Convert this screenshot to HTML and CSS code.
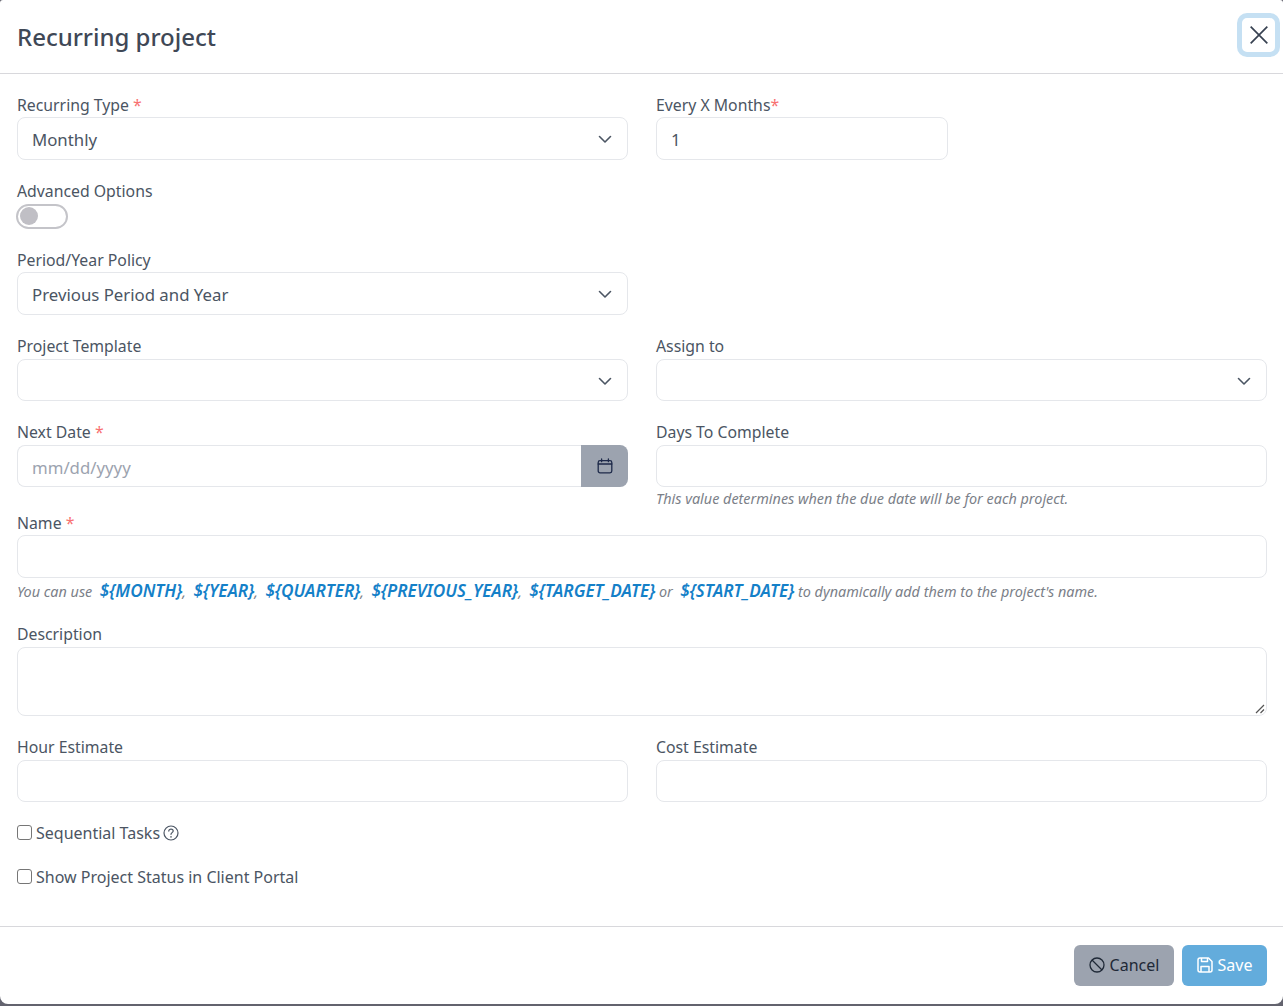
FILE: index.html
```html
<!DOCTYPE html>
<html lang="en">
<head>
<meta charset="utf-8">
<title>Recurring project</title>
<link rel="stylesheet" href="styles.css">
</head>
<body>
<div class="modal">
  <header class="modal-header">
    <h1 class="modal-title">Recurring project</h1>
    <button class="close" type="button" aria-label="Close">
      <svg viewBox="0 0 16 16" width="18" height="18" fill="none" stroke="currentColor" stroke-width="1.5"><path d="M.6.6 15.4 15.4M15.4.6.6 15.4"/></svg>
    </button>
  </header>
  <form class="modal-body">
    <div class="field span-2">
      <label class="label">Recurring Type <span class="req">*</span></label>
      <div class="control select">Monthly<svg class="chev" viewBox="0 0 16 16" width="16" height="16" fill="none" stroke="currentColor" stroke-width="1.6" stroke-linecap="round" stroke-linejoin="round"><path d="m2.5 5.5 5.5 5.5 5.5-5.5"/></svg></div>
    </div>
    <div class="field">
      <label class="label">Every X Months<span class="req">*</span></label>
      <div class="control">1</div>
    </div>
    <div class="field span-4">
      <label class="label">Advanced Options</label>
      <div class="toggle"><span class="knob"></span></div>
    </div>
    <div class="field span-2">
      <label class="label">Period/Year Policy</label>
      <div class="control select">Previous Period and Year<svg class="chev" viewBox="0 0 16 16" width="16" height="16" fill="none" stroke="currentColor" stroke-width="1.6" stroke-linecap="round" stroke-linejoin="round"><path d="m2.5 5.5 5.5 5.5 5.5-5.5"/></svg></div>
    </div>
    <div class="spacer span-2"></div>
    <div class="field span-2">
      <label class="label">Project Template</label>
      <div class="control select"><svg class="chev" viewBox="0 0 16 16" width="16" height="16" fill="none" stroke="currentColor" stroke-width="1.6" stroke-linecap="round" stroke-linejoin="round"><path d="m2.5 5.5 5.5 5.5 5.5-5.5"/></svg></div>
    </div>
    <div class="field span-2">
      <label class="label">Assign to</label>
      <div class="control select"><svg class="chev" viewBox="0 0 16 16" width="16" height="16" fill="none" stroke="currentColor" stroke-width="1.6" stroke-linecap="round" stroke-linejoin="round"><path d="m2.5 5.5 5.5 5.5 5.5-5.5"/></svg></div>
    </div>
    <div class="field span-2">
      <label class="label">Next Date <span class="req">*</span></label>
      <div class="date">
        <div class="control date-input placeholder">mm/dd/yyyy</div>
        <div class="date-btn">
          <svg viewBox="0 0 16 16" width="16" height="16" fill="none" stroke="#1e2a4a" stroke-width="1.3" stroke-linecap="round"><rect x="1.2" y="2.6" width="13.6" height="12.2" rx="1.8"/><path d="M1.2 6h13.6M4.6.9v2.8M11.4.9v2.8"/></svg>
        </div>
      </div>
    </div>
    <div class="field span-2">
      <label class="label">Days To Complete</label>
      <div class="control"></div>
      <p class="help">This value determines when the due date will be for each project.</p>
    </div>
    <div class="field span-4 name-field">
      <label class="label">Name <span class="req">*</span></label>
      <div class="control"></div>
      <p class="help name-help">You can use &nbsp;<b>${MONTH}</b>, &nbsp;<b>${YEAR}</b>, &nbsp;<b>${QUARTER}</b>, &nbsp;<b>${PREVIOUS_YEAR}</b>, &nbsp;<b>${TARGET_DATE}</b> or &nbsp;<b>${START_DATE}</b> to dynamically add them to the project's name.</p>
    </div>
    <div class="field span-4">
      <label class="label">Description</label>
      <div class="control textarea">
        <svg class="grip" viewBox="0 0 10 10" width="10" height="10" stroke="#555" stroke-width="1.2"><path d="M1 9 9 1M5.5 9 9 5.5"/></svg>
      </div>
    </div>
    <div class="field span-2">
      <label class="label">Hour Estimate</label>
      <div class="control"></div>
    </div>
    <div class="field span-2">
      <label class="label">Cost Estimate</label>
      <div class="control"></div>
    </div>
    <div class="check check-first span-4">
      <span class="box"></span>Sequential Tasks
      <svg class="q" viewBox="0 0 16 16" width="16" height="16" fill="none" stroke="currentColor" stroke-width="1.2" stroke-linecap="round"><circle cx="8" cy="8" r="7"/><path d="M5.8 6.1c0-1.3 1-2 2.2-2s2.2.8 2.2 1.9c0 1.6-2.2 1.700-2.200 3.300"/><path d="M8 11.700v.2" stroke-width="1.500"/></svg>
    </div>
    <div class="check span-4">
      <span class="box"></span>Show Project Status in Client Portal
    </div>
  </form>
  <footer class="modal-footer">
    <button class="btn btn-cancel" type="button">
      <svg viewBox="0 0 16 16" width="16" height="16" fill="none" stroke="currentColor" stroke-width="1.300"><circle cx="8" cy="8" r="7"/><path d="M3 3l10 10"/></svg>
      Cancel
    </button>
    <button class="btn btn-save" type="button">
      <svg viewBox="0 0 16 16" width="16" height="16" fill="none" stroke="currentColor" stroke-width="1.500" stroke-linejoin="round"><path d="M1 3a2 2 0 0 1 2-2h8.500L15 4.500V13a2 2 0 0 1-2 2H3a2 2 0 0 1-2-2z"/><path d="M4.500 1v3.500h6V1M4 15V9.500h8V15"/></svg>
      Save
    </button>
  </footer>
</div>
</body>
</html>
```
FILE: styles.css
```css
* { box-sizing: border-box; }
html, body { margin: 0; padding: 0; height: 100%; }
body {
  background: #63636e;
  font-family: "Noto Sans", "Open Sans", sans-serif;
  font-size: 16px;
  line-height: 24px;
  color: #4b5563;
  overflow: hidden;
}
.modal {
  height: 1004px;
  background: #fff;
  border-radius: 3px 3px 8px 8px;
  display: flex;
  flex-direction: column;
}
.modal-header {
  height: 74px;
  flex: none;
  border-bottom: 1px solid #d8d8dc;
  padding: 13px 3px 0 17px;
  display: flex;
  justify-content: space-between;
  align-items: flex-start;
}
.modal-title {
  margin: 0;
  font-size: 24px;
  line-height: 47px;
  font-weight: 500;
  letter-spacing: -0.02px;
  color: #3f4856;
}
.close {
  width: 43px;
  height: 44px;
  padding: 0;
  display: flex;
  align-items: center;
  justify-content: center;
  margin: 0;
  border: 0;
  border-radius: 10px;
  background: #fff;
  color: #374151;
  box-shadow: inset 0 0 0 5px #c5e0f3;
}
.modal-body {
  flex: 1;
  padding: 19.300px 16px 0 17px;
  display: grid;
  grid-template-columns: repeat(4, 1fr);
  column-gap: 28px;
  row-gap: 20px;
  align-content: start;
}
.span-2 { grid-column: span 2; }
.span-4 { grid-column: span 4; }
.label {
  display: block;
  margin: -0.700px 0 0.700px;
  color: #4b5563;
  font-size: 15.800px;
}
.req { color: #f87171; }
.control {
  height: 42.400px;
  border: 1px solid #e5e7eb;
  border-radius: 8px;
  padding: 0 14px;
  line-height: 43px;
  font-size: 16.800px;
  color: #4b5563;
  background: #fff;
}
.select { position: relative; }
.chev { position: absolute; right: 14px; top: 13px; color: #4b5563; }
.toggle {
  width: 52px;
  height: 25px;
  margin: 0 0 -0.400px -1px;
  border: 2px solid #c4c4c9;
  border-radius: 13px;
  padding: 1.500px 2px;
  background: #fff;
}
.knob {
  display: block;
  width: 18px;
  height: 18px;
  border-radius: 50%;
  background: #c0bfc5;
}
.date { display: flex; }
.date-input {
  flex: 1;
  border-right: 0;
  border-radius: 8px 0 0 8px;
}
.placeholder { color: #9ca3af; }
.date-btn {
  width: 47px;
  height: 42.400px;
  flex: none;
  background: #9ca3af;
  border-radius: 0 8px 8px 0;
  display: flex;
  align-items: center;
  justify-content: center;
}
.help {
  margin: 2px 0 0;
  font-size: 14.400px;
  line-height: 20px;
  font-style: italic;
  color: #7b8088;
}
.help b { font-weight: 600; color: #1480c8; font-size: 17.200px; }
.name-field { margin: -18.300px 0 0.700px; }
.name-field .label { margin: 0; }
.name-help { margin-top: 3.500px; }
.textarea { height: 69px; position: relative; }
.grip { position: absolute; right: 1px; bottom: 1px; }
.check {
  display: flex;
  align-items: center;
  font-size: 16px;
  color: #4b5563;
  height: 24px;
}
.check-first { margin-top: -1px; }
.box {
  width: 15px;
  height: 15px;
  border: 1.500px solid #767676;
  border-radius: 3px;
  margin-right: 4px;
  transform: translateY(-1px);
}
.q { margin-left: 3px; }
.modal-footer {
  height: 78px;
  flex: none;
  border-top: 1px solid #d8d8dc;
  padding: 18px 16px 0 0;
  display: flex;
  justify-content: flex-end;
  gap: 8px;
}
.btn {
  height: 41px;
  border: 0;
  border-radius: 6px;
  font-family: inherit;
  font-size: 16px;
  line-height: 20px;
  display: flex;
  align-items: center;
  justify-content: center;
  gap: 5px;
  padding: 0 0 2px;
}
.btn-cancel { width: 100px; background: #9ca3af; color: #1f2937; }
.btn-save { width: 85px; background: #63acdc; color: #fff; }
```
